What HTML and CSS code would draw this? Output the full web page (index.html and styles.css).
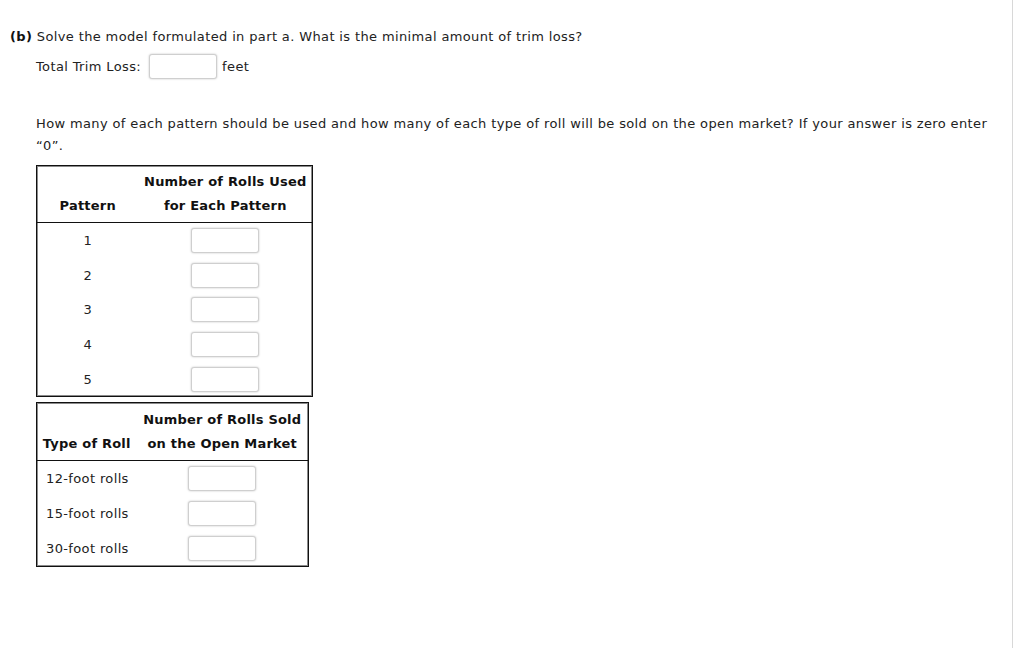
FILE: index.html
```html
<!DOCTYPE html>
<html>
<head>
<meta charset="utf-8">
<link rel="stylesheet" href="styles.css">
</head>
<body>
<div class="page">
  <div class="title"><b>(b)</b> Solve the model formulated in part a. What is the minimal amount of trim loss?</div>
  <div class="trim">
    <span class="trim-label">Total Trim Loss:</span>
    <input class="box" type="text">
    <span class="unit">feet</span>
  </div>
  <p class="question">How many of each pattern should be used and how many of each type of roll will be sold on the open market? If your answer is zero enter “0”.</p>

  <table class="grid grid-pattern">
    <colgroup><col class="c1"><col class="c2"></colgroup>
    <thead>
      <tr><th>Pattern</th><th>Number of Rolls Used<br>for Each Pattern</th></tr>
    </thead>
    <tbody>
      <tr><td class="num">1</td><td class="in"><input class="box" type="text"></td></tr>
      <tr><td class="num">2</td><td class="in"><input class="box" type="text"></td></tr>
      <tr><td class="num">3</td><td class="in"><input class="box" type="text"></td></tr>
      <tr><td class="num">4</td><td class="in"><input class="box" type="text"></td></tr>
      <tr><td class="num">5</td><td class="in"><input class="box" type="text"></td></tr>
    </tbody>
  </table>

  <table class="grid grid-roll">
    <colgroup><col class="c1"><col class="c2"></colgroup>
    <thead>
      <tr><th class="type">Type of Roll</th><th>Number of Rolls Sold<br>on the Open Market</th></tr>
    </thead>
    <tbody>
      <tr><td class="label">12-foot rolls</td><td class="in"><input class="box" type="text"></td></tr>
      <tr><td class="label">15-foot rolls</td><td class="in"><input class="box" type="text"></td></tr>
      <tr><td class="label">30-foot rolls</td><td class="in"><input class="box" type="text"></td></tr>
    </tbody>
  </table>
</div>
</body>
</html>
```

FILE: styles.css
```css
html, body {
  margin: 0;
  padding: 0;
  background: #fff;
}
body {
  font-family: "DejaVu Sans", Verdana, sans-serif;
  font-size: 13px;
  letter-spacing: 0.37px;
  color: #222;
}
.page {
  box-sizing: border-box;
  width: 1013px;
  height: 648px;
  border-right: 1px solid #d8d8d8;
  padding: 27px 0 0 10px;
  overflow: hidden;
}
.title {
  line-height: 20px;
}
.title b {
  color: #111;
}
.trim {
  display: flex;
  align-items: center;
  margin: 7px 0 0 26px;
  height: 25px;
}
.trim-label {
  margin-right: 8px;
}
.unit {
  margin-left: 5px;
}
.box {
  box-sizing: border-box;
  width: 68px;
  height: 25px;
  margin: 0;
  padding: 0 4px;
  border: 1px solid #cfcfcf;
  border-radius: 3px;
  box-shadow: 0 0 2px rgba(0, 0, 0, 0.25);
  background: #fff;
  font: inherit;
  display: block;
}
.question {
  margin: 34px 0 0 26px;
  line-height: 22px;
  width: 962px;
}
.grid {
  margin: 8px 0 0 26px;
  border-collapse: collapse;
  table-layout: fixed;
  border: 1px solid #111;
  box-shadow: inset 0 0 0 1px #8a8a8a;
}
.grid-pattern {
  width: 277px;
}
.grid-roll {
  width: 273px;
  margin-top: 5px;
}
.grid-pattern .c1 { width: 102px; }
.grid-roll .c1 { width: 100px; }
.grid th {
  font-weight: bold;
  color: #111;
  line-height: 24px;
  padding: 4px 0 4px;
  vertical-align: bottom;
  text-align: center;
  border-bottom: 1px solid #111;
  white-space: nowrap;
  letter-spacing: 0.2px;
}
.grid-roll th {
  padding-top: 5px;
}
.grid td {
  padding: 0;
  height: 34.7px;
  vertical-align: middle;
}
.grid-roll td {
  height: 35px;
}
.grid td.num {
  text-align: center;
}
.grid td.label {
  padding-left: 9px;
}
.grid td.in .box {
  margin: 0 auto;
}
```
